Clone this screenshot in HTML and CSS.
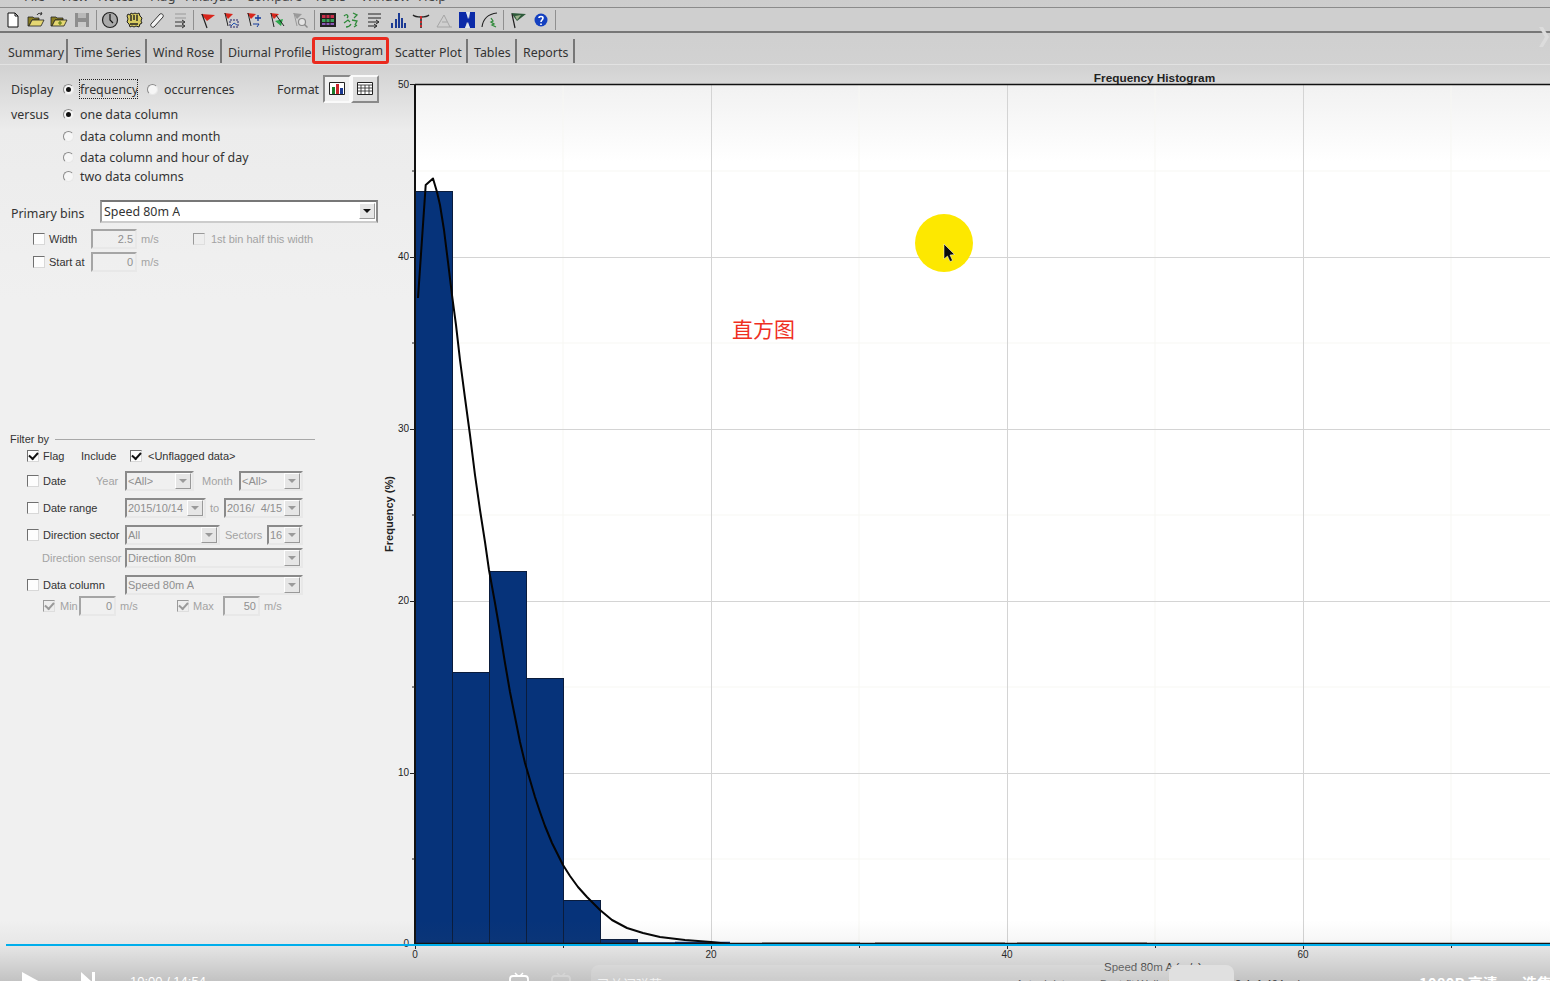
FILE: index.html
```html
<!DOCTYPE html>
<html lang="en">
<head>
<meta charset="utf-8">
<title>Histogram</title>
<link rel="stylesheet" href="styles.css">
</head>
<body>
<div class="app">
  <div class="menubar"><span class="mi m-file">File</span><span class="mi m-view">View</span><span class="mi m-notes">Notes</span><span class="mi m-flag">Flag</span><span class="mi m-analyze">Analyze</span><span class="mi m-compare">Compare</span><span class="mi m-tools">Tools</span><span class="mi m-window">Window</span><span class="mi">Help</span></div>

  <div class="toolbar">
    <span class="ti"><svg viewBox="0 0 18 18"><path d="M4 2h7l3 3v11H4z" fill="#fff" stroke="#111"/><path d="M11 2v3h3" fill="none" stroke="#111"/></svg></span>
    <span class="ti"><svg viewBox="0 0 18 18"><path d="M1 15V6h5l1 1h5v2H5L2 15z" fill="#8a7f22" stroke="#222" stroke-width=".8"/><path d="M2 15l3-6h12l-3 6z" fill="#e5d772" stroke="#222" stroke-width=".8"/><path d="M10 4c1-2 3-2 5-1l-1-2M15 3l-2 1" fill="none" stroke="#333"/></svg></span>
    <span class="ti"><svg viewBox="0 0 18 18"><path d="M1 15V6h5l1 1h6v2H5L2 15z" fill="#8a7f22" stroke="#222" stroke-width=".8"/><path d="M2 15l3-6h12l-3 6z" fill="#e5d772" stroke="#222" stroke-width=".8"/><path d="M10 10v4M8 12h4" stroke="#5a7a10" stroke-width="1.2"/></svg></span>
    <span class="ti"><svg viewBox="0 0 18 18"><path d="M2 2h14v14H2z" fill="#8e8e8e"/><path d="M5 2h8v5H5z" fill="#b9b9b9"/><path d="M5 11h8v5H5z" fill="#c9c9c9"/></svg></span>
    <span class="sep"></span>
    <span class="ti"><svg viewBox="0 0 18 18"><circle cx="9" cy="9" r="7.5" fill="#a9a9a9" stroke="#222" stroke-width="1.2"/><path d="M9 3v6l3 3" fill="none" stroke="#111" stroke-width="1.2"/></svg></span>
    <span class="ti"><svg viewBox="0 0 18 18"><path d="M3 3l2 1 1-2 2 1 2-1 2 1 2-1 1 3 2 2-1 3 1 2-2 1-1 3-3-1-2 1-2-1-2 1-1-3-2-2 1-3-1-3z" fill="#d8cc62" stroke="#222"/><path d="M6 4v6M9 4v5M12 4v6M5 13h8" stroke="#222" stroke-width="1.4"/></svg></span>
    <span class="ti"><svg viewBox="0 0 18 18"><path d="M3 13 12 3c2-1 4 1 3 3L6 16c-2 1-4-1-3-3z" fill="#f4f4f4" stroke="#333"/></svg></span>
    <span class="ti"><svg viewBox="0 0 18 18"><path d="M4 3h11M4 7h11" stroke="#999" fill="none"/><path d="M11 9l3 2-3 2M11 13l3 2-3 2" stroke="#333" fill="none"/><path d="M4 11h9M4 15h9" stroke="#333"/></svg></span>
    <span class="sep"></span>
    <span class="ti"><svg viewBox="0 0 18 18"><path d="M2 3l14 1-8 6z" fill="#d8261c"/><path d="M3 3l5 14" stroke="#222" stroke-width="1.2"/></svg></span>
    <span class="ti"><svg viewBox="0 0 18 18"><path d="M2 2l9 1-5 5z" fill="#d8261c"/><path d="M3 2l3 13" stroke="#222"/><path d="M8 9h8v7H8z" fill="none" stroke="#226" stroke-dasharray="2 1"/><path d="M9 15l3-3 3 2" fill="none" stroke="#1d4fb0"/></svg></span>
    <span class="ti"><svg viewBox="0 0 18 18"><path d="M2 2l9 1-5 5z" fill="#d8261c"/><path d="M3 2l3 13" stroke="#222"/><path d="M13 4v6M10 7h6" stroke="#123a9c" stroke-width="1.3"/><path d="M8 13h6l-2 3" fill="none" stroke="#123a9c"/></svg></span>
    <span class="ti"><svg viewBox="0 0 18 18"><path d="M2 2l9 1-5 5z" fill="#d8261c"/><path d="M3 2l3 14" stroke="#222"/><path d="M7 10l8-2-2 7z" fill="#2aa84a"/><path d="M8 4l8 11" stroke="#222"/></svg></span>
    <span class="ti"><svg viewBox="0 0 18 18"><path d="M2 2l9 1-5 5z" fill="#9a9a9a"/><path d="M3 2l3 13" stroke="#999"/><circle cx="11" cy="11" r="3.5" fill="#e4e4e4" stroke="#8a8a8a" stroke-width="1.2"/><path d="M13.5 13.5l3 3" stroke="#8a8a8a" stroke-width="1.4"/></svg></span>
    <span class="sep"></span>
    <span class="ti"><svg viewBox="0 0 18 18"><path d="M1 2h16v14H1z" fill="#222"/><path d="M3 4h12v3H3z" fill="#c9304a"/><path d="M3 8h12v3H3z" fill="#3aa35a"/><path d="M3 12h12v2H3z" fill="#8a5ab8"/><path d="M7 2v14M11 2v14" stroke="#222"/></svg></span>
    <span class="ti"><svg viewBox="0 0 18 18"><g fill="none" stroke="#2f8a3a" stroke-width="1.3"><path d="M2 5c3-3 5 0 3 2M11 2l4 2-3 3M2 12l4-3 2 2M10 9l5 1-2 4M4 16c2 0 4-1 5-3M12 16l3-2"/></g></svg></span>
    <span class="ti"><svg viewBox="0 0 18 18"><path d="M3 3h13M3 7h13M3 11h10M3 15h8" stroke="#222" fill="none"/><path d="M11 9l3 2-3 2M9 13l3 2-3 2" stroke="#222" fill="none"/></svg></span>
    <span class="ti"><svg viewBox="0 0 18 18"><path d="M2 12h2v5H2zM6 8h2v9H6zM9 2h2v15H9zM12 7h2v10h-2zM15 12h2v5h-2z" fill="#1b3a94"/></svg></span>
    <span class="ti"><svg viewBox="0 0 18 18"><path d="M1 4c2 2 4 2 8 2s6 0 8-2" fill="none" stroke="#222" stroke-width="1.3"/><path d="M9 6v11" stroke="#222" stroke-width="1.5"/><path d="M9 5v3M9 10v2M9 14v2" stroke="#c8282a" stroke-width="2"/></svg></span>
    <span class="ti"><svg viewBox="0 0 18 18"><path d="M2 16h15M2 16 9 4l6 12M7 11h5" fill="none" stroke="#a5a5a5"/></svg></span>
    <span class="ti"><svg viewBox="0 0 18 18"><path d="M1 1h7l3 7 1-7h5v16h-5L9 11l-2 6H1z" fill="#0b2aa8"/><path d="M8 1l2 7 2-7zM7 17l3-6 2 6z" fill="#dfe7f0"/></svg></span>
    <span class="ti"><svg viewBox="0 0 18 18"><path d="M1 16C2 8 7 3 16 2" fill="none" stroke="#222" stroke-width="1.1"/><path d="M10 7l2 3-2 1 3 2-2 1 4 2" fill="none" stroke="#2f8a3a" stroke-width="1.3"/></svg></span>
    <span class="sep"></span>
    <span class="ti"><svg viewBox="0 0 18 18"><path d="M2 2l15 1-9 7z" fill="#2d5a3a"/><path d="M3 3l3 14" stroke="#222" stroke-width="1.2"/><path d="M6 5l6-1-4 5z" fill="#9ab08a"/></svg></span>
    <span class="ti"><svg viewBox="0 0 18 18"><circle cx="9" cy="9" r="6.500" fill="#1440c0"/><path d="M7 7c0-2 4-2 4 0 0 2-2 2-2 4" fill="none" stroke="#fff" stroke-width="1.600"/><path d="M8.200 12.500h1.600v1.600H8.200z" fill="#fff"/></svg></span>
    <span class="sep"></span>
  </div>

  <div class="tabs">
    <span class="tab t-summary">Summary</span>
    <span class="tab t-series">Time Series</span>
    <span class="tab t-rose">Wind Rose</span>
    <span class="tab t-diurnal">Diurnal Profile</span>
    <span class="tab-active">Histogram</span>
    <span class="tab t-scatter">Scatter Plot</span>
    <span class="tab t-tables">Tables</span>
    <span class="tab t-reports">Reports</span>
  </div>

  <div class="main">
    <section class="panel">
      <div class="row big first">
        <span class="lbl c-display">Display</span>
        <span class="radio on"></span><span class="focus">frequency</span>
        <span class="radio r-occ"></span><span class="lbl c-occ">occurrences</span>
        <span class="lbl c-format">Format</span>
        <span class="fmt pressed"><svg viewBox="0 0 16 14" width="16" height="14"><path d="M.5.5h15v12H.5z" fill="#fff" stroke="#222"/><path d="M3 5h3v7H3z" fill="#1b7a2a"/><path d="M7 2h3v10H7z" fill="#c8242a"/><path d="M11 6h3v6h-3z" fill="#1b3a94"/></svg></span>
        <span class="fmt"><svg viewBox="0 0 16 14" width="16" height="14"><path d="M.5.5h15v12H.5z" fill="#fff" stroke="#222"/><path d="M1 3h14M1 6h14M1 9h14M4 3v9M8 3v9M12 3v9" stroke="#222" stroke-width=".8"/></svg></span>
      </div>
      <div class="row big m9">
        <span class="lbl c-display">versus</span>
        <span class="radio on"></span><span class="lbl c-opt">one data column</span>
      </div>
      <div class="row big m6"><span class="radio r-only"></span><span class="lbl c-opt">data column and month</span></div>
      <div class="row big m5"><span class="radio r-only"></span><span class="lbl c-opt">data column and hour of day</span></div>
      <div class="row big m3"><span class="radio r-only"></span><span class="lbl c-opt">two data columns</span></div>

      <div class="row big m19">
        <span class="lbl c-primary">Primary bins</span>
        <span class="combo primary"><span class="combo-text">Speed 80m A</span><span class="arrow dark"></span></span>
      </div>
      <div class="row small m12">
        <span class="check c-bin"></span><span class="lbl c-binlabel">Width</span>
        <span class="input i-bin">2.5</span><span class="lbl off c-unit">m/s</span>
        <span class="check off c-half"></span><span class="lbl off">1st bin half this width</span>
      </div>
      <div class="row small m7">
        <span class="check c-bin"></span><span class="lbl c-binlabel">Start at</span>
        <span class="input i-bin">0</span><span class="lbl off c-unit">m/s</span>
      </div>

      <div class="row small m161">
        <span class="lbl c-filter">Filter by</span><span class="rule"></span>
      </div>
      <div class="row small m1">
        <span class="check c-f on"></span><span class="lbl c-flag">Flag</span>
        <span class="lbl c-include">Include</span>
        <span class="check on"></span><span class="lbl c-unflag">&lt;Unflagged data&gt;</span>
      </div>
      <div class="row small m9">
        <span class="check c-f"></span><span class="lbl c-name-date">Date</span>
        <span class="lbl off c-year">Year</span>
        <span class="combo w69"><span class="combo-text">&lt;All&gt;</span><span class="arrow"></span></span>
        <span class="lbl off c-month">Month</span>
        <span class="combo w64"><span class="combo-text">&lt;All&gt;</span><span class="arrow"></span></span>
      </div>
      <div class="row small m11">
        <span class="check c-f"></span><span class="lbl c-name">Date range</span>
        <span class="combo w81"><span class="combo-text">2015/10/14</span><span class="arrow"></span></span>
        <span class="lbl off c-to">to</span>
        <span class="combo w79"><span class="combo-text">2016/&nbsp;&nbsp;4/15</span><span class="arrow"></span></span>
      </div>
      <div class="row small m11">
        <span class="check c-f"></span><span class="lbl c-name">Direction sector</span>
        <span class="combo w95"><span class="combo-text">All</span><span class="arrow"></span></span>
        <span class="lbl off c-sectors">Sectors</span>
        <span class="combo w36"><span class="combo-text">16</span><span class="arrow"></span></span>
      </div>
      <div class="row small m7">
        <span class="lbl off c-sensor">Direction sensor</span>
        <span class="combo w178"><span class="combo-text">Direction 80m</span><span class="arrow"></span></span>
      </div>
      <div class="row small m11">
        <span class="check c-f"></span><span class="lbl c-name">Data column</span>
        <span class="combo w178"><span class="combo-text">Speed 80m A</span><span class="arrow"></span></span>
      </div>
      <div class="row small m5">
        <span class="check off on c-min"></span><span class="lbl off c-minl">Min</span>
        <span class="input i-lim">0</span><span class="lbl off c-unit2">m/s</span>
        <span class="check off on c-max"></span><span class="lbl off c-maxl">Max</span>
        <span class="input i-lim">50</span><span class="lbl off c-unit">m/s</span>
      </div>
    </section>

    <svg class="chart" viewBox="380 65 1170 916" width="1170" height="916">
      <defs>
        <linearGradient id="plotbg" x1="0" y1="0" x2="0" y2="1">
          <stop offset="0" stop-color="#f1f1f1"/><stop offset=".09" stop-color="#fff"/>
        </linearGradient>
      </defs>
      <rect x="415" y="84" width="1135" height="860" fill="url(#plotbg)"/>
      <g stroke="#f7f7f3" stroke-width="1">
        <path d="M563 84V944M859 84V944M1155 84V944M1451 84V944"/>
        <path d="M415 171H1550M415 343H1550M415 515H1550M415 687H1550M415 859H1550"/>
      </g>
      <g stroke="#d4d4d4" stroke-width="1">
        <path d="M711.500 84V944M1007.500 84V944M1303.500 84V944"/>
        <path d="M415 257.500H1550M415 429.500H1550M415 601.500H1550M415 773.500H1550"/>
      </g>
      <g fill="#06337a" stroke="#0a1c3c" stroke-width="1">
        <rect x="415.500" y="191.500" width="37" height="753"/>
        <rect x="452.500" y="672.500" width="37" height="272"/>
        <rect x="489.500" y="571.500" width="37" height="373"/>
        <rect x="526.500" y="678.500" width="37" height="266"/>
        <rect x="563.500" y="900.500" width="37" height="44"/>
        <rect x="600.500" y="939.500" width="37" height="5"/>
      </g>
      <path d="M638 943H675M675 942.500H730" stroke="#06337a" stroke-width="1.500"/>
      <path d="M762 943H860M875 943H1005M1017 943H1147" stroke="#8a8a8a" stroke-width="1.500"/>
      <path d="M418 298 425.700 185 433 178.500 437 192 440 205 444 230 448 262 452 295 456 325 460 360 465 398 470 435 475 475 480 510 485 542 489 570 495 603 500 632 505 663 510 692 515 717 520 742 525 763 530 780 535 797 540 812 545 826 552 843 558 855 563 865 570 876 578 887 587 897 600 910 612 920 627 928 643 933 660 937 685 940 711 942 730 944" fill="none" stroke="#050505" stroke-width="2" stroke-linejoin="round"/>
      <path d="M415 84.500H1550" stroke="#111" stroke-width="1.500"/>
      <path d="M415 84V944" stroke="#111" stroke-width="2"/>
      <path d="M415 943.500H1550" stroke="#111" stroke-width="1.500"/>
      <path d="M410 84.500H415M410 257.500H415M410 429.500H415M410 601.500H415M410 773.500H415M412 171H415M412 343H415M412 515H415M412 687H415M412 859H415" stroke="#222"/>
      <path d="M415.500 944V949M563.500 944V948M711.500 944V949M859.500 944V948M1007.500 944V949M1155.500 944V948M1303.500 944V949M1451.500 944V948" stroke="#222"/>
      <g class="tick ya">
        <text x="409" y="88">50</text><text x="409" y="260">40</text><text x="409" y="432">30</text><text x="409" y="604">20</text><text x="409" y="776">10</text><text x="409" y="947">0</text>
      </g>
      <g class="tick xa">
        <text x="415" y="958">0</text><text x="711" y="958">20</text><text x="1007" y="958">40</text><text x="1303" y="958">60</text>
      </g>
      <text class="title" x="1154.500" y="82">Frequency Histogram</text>
      <text class="ytitle" transform="translate(393 514) rotate(-90)">Frequency (%)</text>
      <text class="xtitle" x="1104" y="971">Speed 80m A (m/s)</text>
      <text class="legend" x="1016" y="988">Actual data</text>
      <text class="legend" x="1100" y="988">Best-fit Weibull</text>
      <text class="legend" x="1235" y="988">2.4, 1.404 m/s</text>
      <circle cx="944" cy="243" r="29" fill="#fde800"/>
      <path d="M944 244v15l3.500-3 2.500 5.500 2.500-1-2.500-5.500 4.500-.5z" fill="#0a0a0a" stroke="#fff" stroke-width=".5"/>
      <text class="note" x="732" y="337">直方图</text>
    </svg>
  </div>

  <div class="player">
    <div class="progress"></div>
    <div class="controls">
      <svg class="play" viewBox="0 0 22 24" width="22" height="24"><path d="M1 1l20 11L1 23z" fill="#fff"/></svg>
      <svg class="next" viewBox="0 0 16 20" width="16" height="20"><path d="M1 1l10 9L1 19z" fill="#fff"/><path d="M12 1h3v18h-3z" fill="#fff"/></svg>
      <span class="time">10:00 / 14:54</span>
      <svg class="tv" viewBox="0 0 20 18" width="20" height="18"><path d="M6 1l3 3M14 1l-3 3" stroke="#fff" stroke-width="1.500"/><rect x="1" y="4" width="18" height="13" rx="3" fill="none" stroke="#fff" stroke-width="1.800"/></svg>
      <svg class="tv dim" viewBox="0 0 20 18" width="20" height="18"><path d="M6 1l3 3M14 1l-3 3" stroke="#ddd" stroke-width="1.500"/><rect x="1" y="4" width="18" height="13" rx="3" fill="none" stroke="#ddd" stroke-width="1.800"/></svg>
      <div class="danmaku"><span class="hint">已关闭弹幕</span><span class="send"></span></div>
      <span class="quality">1080P 高清</span>
      <span class="episodes">选集</span>
    </div>
  </div>
  <svg class="chev" viewBox="0 0 12 22" width="12" height="22"><path d="M1 1h4l6 10-6 10H1l6-10z" fill="#dcdcdc"/></svg>
</div>
</body>
</html>
```

FILE: styles.css
```css
* { box-sizing: border-box; }
html, body { margin: 0; height: 100%; overflow: hidden; }
body { font-family: "Noto Sans", "Open Sans", sans-serif; color: #333; }
.app {
  position: relative;
  width: 1550px;
  height: 981px;
  overflow: hidden;
  display: flex;
  flex-direction: column;
  background: linear-gradient(#cdcdcd 0, #d2d2d2 66px, #ececec 130px, #f0f0f0 300px, #f0f0f0 900px);
}

/* menu bar, cut off by the top of the frame */
.menubar { height: 7px; overflow: hidden; display: flex; padding-left: 24px; font-size: 13px; line-height: 13px; }
.mi { margin-top: -10px; color: #444; }
.m-file { width: 36px; }
.m-view { width: 38px; }
.m-notes { width: 52px; }
.m-flag { width: 36px; }
.m-analyze { width: 60px; }
.m-compare { width: 68px; }
.m-tools { width: 47px; }
.m-window { width: 57px; }

/* toolbar */
.toolbar {
  height: 26px;
  display: flex;
  align-items: center;
  padding-left: 1.5px;
  background: #cfcfcf;
  border-top: 1px solid #8b8b8b;
  border-bottom: 2px solid #777;
}
.ti { width: 23.1px; height: 18px; display: flex; justify-content: center; }
.ti svg { width: 18px; height: 18px; }
.sep { width: 5px; height: 20px; position: relative; }
.sep::after { content: ""; display: block; width: 1px; height: 20px; margin-left: 2px; background: #8f8f8f; }

/* tabs */
.tabs {
  height: 32px;
  display: flex;
  align-items: flex-start;
  padding: 5px 0 0 0;
  border-bottom: 1px solid #e2e2e2;
  font-size: 12.400px;
}
.tab {
  height: 24px;
  margin-top: 1px;
  line-height: 28px;
  white-space: nowrap;
  border-right: 2px solid #777;
  color: #333;
}
.t-summary { width: 68px; padding-left: 8px; }
.t-series { width: 79px; padding-left: 6px; }
.t-rose { width: 75px; padding-left: 6px; }
.t-diurnal { width: 90px; padding-left: 6px; border-right: 0; }
.t-scatter { width: 79px; padding-left: 6px; }
.t-tables { width: 49px; padding-left: 6px; }
.t-reports { width: 58px; padding-left: 6px; }
.tab-active {
  width: 77px;
  height: 27px;
  margin-top: -1px;
  padding-left: 4px;
  border: 3px solid #ea2a1e;
  border-radius: 3px;
  text-align: center;
  line-height: 21px;
  white-space: nowrap;
  color: #333;
}

/* main */
.main { flex: 1; display: flex; min-height: 0; }
.panel { width: 380px; flex: none; display: flex; flex-direction: column; padding-top: 16px; }
.chart { flex: none; display: block; }

.row { height: 16px; display: flex; align-items: center; white-space: nowrap; }
.big { font-size: 12.400px; }
.small { font-size: 11px; font-family: "Liberation Sans", Arial, sans-serif; }
.m1 { margin-top: 1px; } .m3 { margin-top: 3px; } .m5 { margin-top: 5px; } .m6 { margin-top: 6px; }
.m7 { margin-top: 7px; } .m9 { margin-top: 9px; } .m11 { margin-top: 11px; } .m12 { margin-top: 12px; }
.m19 { margin-top: 19px; } .m161 { margin-top: 161px; }

.lbl { color: #333; flex: none; }
.lbl.off { color: #a3a3a3; }

.radio {
  width: 11px;
  height: 11px;
  flex: none;
  border-radius: 50%;
  border: 1px solid;
  border-color: #8a8a8a #e8e8e8 #e8e8e8 #8a8a8a;
  background: #f6f6f6;
  display: flex;
  align-items: center;
  justify-content: center;
}
.radio.on::after { content: ""; width: 5px; height: 5px; border-radius: 50%; background: #111; }
.r-only { margin-left: 63px; }
.r-occ { margin-left: 9px; margin-right: 6px; }
.c-display { width: 52px; margin-left: 11px; }
.c-opt { margin-left: 6px; }
.focus { width: 59px; height: 20px; flex: none; margin-left: 5px; border: 1px dotted #222; line-height: 20px; overflow: hidden; }
.c-occ { width: 113px; }
.c-format { width: 46px; }
.fmt {
  width: 28px;
  height: 28px;
  flex: none;
  display: flex;
  align-items: center;
  justify-content: center;
  background: #dedede;
  border: 2px solid;
  border-color: #fafafa #8a8a8a #8a8a8a #fafafa;
}
.fmt.pressed { background: #f0f0f0; border-color: #8a8a8a #fafafa #fafafa #8a8a8a; }

.c-primary { width: 89px; margin: 4px 0 0 11px; }
.combo {
  height: 20px;
  flex: none;
  display: flex;
  align-items: center;
  justify-content: space-between;
  padding: 0 1px 0 1px;
  border: 2px solid;
  border-color: #8a8a8a #e8e8e8 #e8e8e8 #8a8a8a;
  color: #8f8f8f;
}
.primary { width: 278px; height: 23px; background: #fff; color: #333; padding-left: 2px; border-color: #777 #8a8a8a #ccc #999; }
.combo-text { white-space: nowrap; overflow: hidden; }
.arrow {
  width: 16px;
  height: 16px;
  flex: none;
  background: #e6e6e6;
  border: 1px solid;
  border-color: #fff #999 #999 #fff;
  position: relative;
}
.arrow::after {
  content: "";
  position: absolute;
  left: 3px;
  top: 5px;
  border: 4px solid transparent;
  border-top: 4px solid #9a9a9a;
  border-bottom: 0;
}
.arrow.dark::after { border-top-color: #111; }

.check {
  width: 12px;
  height: 12px;
  flex: none;
  background: #fdfdfd;
  border: 1px solid;
  border-color: #707070 #d8d8d8 #d8d8d8 #707070;
  position: relative;
}
.check.off { background: #eeeeee; border-color: #9a9a9a #dedede #dedede #9a9a9a; }
.check.on::after {
  content: "";
  position: absolute;
  left: 1px;
  top: 1px;
  width: 7px;
  height: 4px;
  border: solid #111;
  border-width: 0 0 2px 2px;
  transform: rotate(-48deg);
}
.check.off.on::after { border-color: #9a9a9a; }

.input {
  height: 20px;
  flex: none;
  padding-right: 2px;
  text-align: right;
  line-height: 16px;
  color: #8f8f8f;
  border: 2px solid;
  border-color: #a5a5a5 #e8e8e8 #e8e8e8 #a5a5a5;
}
.i-bin { width: 46px; }
.i-lim { width: 37px; }
.c-bin { margin-left: 33px; }
.c-binlabel { width: 42px; margin-left: 4px; }
.c-unit { width: 17px; margin-left: 4px; }
.c-half { margin-left: 35px; margin-right: 6px; }

.c-filter { margin-left: 10px; width: 45px; }
.rule { width: 260px; height: 1px; background: #a8a8a8; }
.c-f { margin-left: 27px; }
.c-flag { width: 38px; margin-left: 4px; }
.c-include { width: 49px; }
.c-unflag { margin-left: 6px; }
.c-name-date { width: 53px; margin-left: 4px; }
.c-name { width: 82px; margin-left: 4px; }
.c-year { width: 29px; }
.c-month { width: 37px; margin-left: 8px; }
.c-to { width: 14px; margin-left: 4px; }
.c-sectors { width: 42px; margin-left: 5px; }
.c-sensor { width: 83px; margin-left: 42px; }
.w69 { width: 69px; } .w64 { width: 64px; } .w81 { width: 81px; } .w79 { width: 79px; }
.w95 { width: 95px; } .w36 { width: 36px; } .w178 { width: 178px; }
.c-min { margin-left: 43px; }
.c-minl { width: 19px; margin-left: 5px; }
.c-unit2 { width: 57px; margin-left: 4px; }
.c-maxl { width: 30px; margin-left: 4px; }

/* chart texts */
.chart text { font-family: "Liberation Sans", Arial, sans-serif; }
.tick text { font-size: 10px; fill: #222; }
.ya text { text-anchor: end; }
.xa text { text-anchor: middle; }
.title { font-size: 11.800px; font-weight: 700; text-anchor: middle; fill: #222; }
.ytitle { font-size: 11px; font-weight: 700; text-anchor: middle; fill: #222; }
.xtitle { font-size: 11.500px; fill: #333; }
.legend { font-size: 11px; fill: #333; }
.chart .note { font-family: "Noto Sans CJK SC", sans-serif; font-size: 21px; fill: #ef2f1f; }

/* video player overlay */
.player {
  position: absolute;
  left: 0;
  right: 0;
  top: 920px;
  height: 61px;
  background: linear-gradient(rgba(90,90,90,0) 0, rgba(90,90,90,.06) 24px, rgba(90,90,90,.3) 61px);
}
.progress { position: absolute; left: 6px; right: 0; top: 24px; height: 2px; background: #00aeec; }
.controls { position: absolute; left: 0; right: 0; top: 45px; height: 40px; display: flex; align-items: flex-start; }
.play { margin: 6px 0 0 21px; flex: none; }
.next { margin: 6px 0 0 37px; flex: none; }
.time { margin: 9px 0 0 34px; width: 379px; flex: none; font-size: 13px; color: #fff; font-family: "Liberation Sans", sans-serif; }
.tv { margin-top: 7px; flex: none; }
.tv.dim { margin-left: 22px; opacity: .6; }
.danmaku {
  width: 643px;
  height: 40px;
  flex: none;
  margin-left: 20px;
  background: rgba(235,235,235,.22);
  border-radius: 8px;
  display: flex;
  justify-content: space-between;
}
.hint { margin: 9px 0 0 6px; font-family: "Noto Sans CJK SC", sans-serif; font-size: 13px; color: #f2f2f2; }
.send { width: 65px; height: 40px; background: #e0e0e0; border-radius: 8px; }
.quality { margin: 7px 0 0 185px; width: 103px; flex: none; font-size: 15px; font-weight: 700; color: #fff; white-space: nowrap; font-family: "Noto Sans CJK SC", sans-serif; }
.episodes { margin-top: 7px; flex: none; font-size: 15px; font-weight: 700; color: #fff; white-space: nowrap; font-family: "Noto Sans CJK SC", sans-serif; }
.chev { position: absolute; right: 0; top: 26px; }
```
